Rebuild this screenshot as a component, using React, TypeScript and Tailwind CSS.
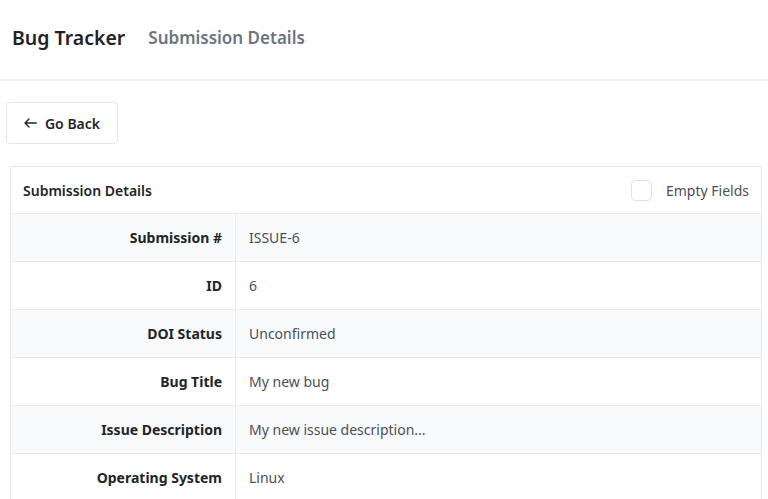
import React from "react";

const rows: [string, string][] = [
  ["Submission #", "ISSUE-6"],
  ["ID", "6"],
  ["DOI Status", "Unconfirmed"],
  ["Bug Title", "My new bug"],
  ["Issue Description", "My new issue description..."],
  ["Operating System", "Linux"],
];

export default function App() {
  return (
    <div className="min-h-screen bg-white text-[#212529]" style={{ fontFamily: '"Noto Sans", "Open Sans", sans-serif' }}>
      <header className="h-[81px] border-b-2 border-[#f0f0f0] flex items-center pl-3 pb-1">
        <span className="text-[19.5px] font-semibold text-[#1f2328]">Bug Tracker</span>
        <span className="ml-[23px] text-[17px] font-semibold text-[#6c757d]">Submission Details</span>
      </header>
      <div className="pl-[6px] pt-[21px]">
        <button className="h-[42px] w-[112px] border border-[#e3e6ea] rounded-[4px] flex items-center justify-center gap-[8px] text-[14px] font-semibold text-[#212529] bg-white">
          <svg width="13" height="10" viewBox="0 0 13 10" fill="none" stroke="#212529" strokeWidth="1.4" strokeLinecap="round" strokeLinejoin="round">
            <path d="M12.3 5H1M5 1L1 5l4 4" />
          </svg>
          <span>Go Back</span>
        </button>
      </div>
      <div className="ml-[10px] mt-[22px] w-[752px] border border-[#e8e8e8]">
        <div className="h-[46px] flex items-center justify-between pl-3 pr-3 bg-white">
          <span className="text-[14px] font-semibold text-[#212529]">Submission Details</span>
          <label className="flex items-center gap-[14px]">
            <span className="w-[21px] h-[21px] rounded-[5px] border border-[#dee2e6] bg-white" />
            <span className="text-[14px] text-[#495057]">Empty Fields</span>
          </label>
        </div>
        {rows.map(([k, v], i) => (
          <div key={k} className={`flex h-[48px] border-t border-[#e9ecef] ${i % 2 === 0 ? "bg-[#f8fafc]" : "bg-white"}`}>
            <div className="w-[225px] shrink-0 border-r border-[#e9ecef] flex items-center justify-end pr-[13px] text-[14px] font-bold text-[#212529]">
              {k}
            </div>
            <div className="flex items-center pl-[13px] text-[14px] text-[#495057]">{v}</div>
          </div>
        ))}
      </div>
    </div>
  );
}
